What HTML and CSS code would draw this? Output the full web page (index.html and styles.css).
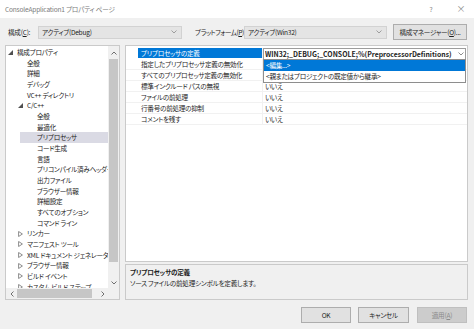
FILE: index.html
```html
<!DOCTYPE html>
<html lang="ja">
<head>
<meta charset="utf-8">
<link rel="stylesheet" href="styles.css">
</head>
<body>
<div class="titlebar">
  <span class="title">ConsoleApplication1 プロパティ ページ</span>
  <span class="tb-btn help">?</span>
  <span class="tb-btn close">×</span>
</div>

<div class="toolbar">
  <span class="lbl cfg-lbl">構成(<u>C</u>):</span>
  <div class="select cfg-sel"><span class="sel-text">アクティブ(Debug)</span><svg class="chev" width="6" height="4" viewBox="0 0 6 4"><polyline points="0.5,0.5 3,3 5.5,0.5" fill="none" stroke="#8a8a8a" stroke-width="0.8"/></svg></div>
  <span class="lbl plat-lbl">プラットフォーム(<u>P</u>):</span>
  <div class="select plat-sel"><span class="sel-text">アクティブ(Win32)</span><svg class="chev" width="6" height="4" viewBox="0 0 6 4"><polyline points="0.5,0.5 3,3 5.5,0.5" fill="none" stroke="#8a8a8a" stroke-width="0.8"/></svg></div>
  <button class="btn mgr">構成マネージャー(<u>O</u>)...</button>
</div>

<div class="main">
  <div class="tree">
    <div class="tree-body">
      <ul class="tree-list">
        <li class="row l0"><span class="tw"><svg width="5" height="5" viewBox="0 0 5 5"><polygon points="5,0 5,5 0,5" fill="#505050"/></svg></span><span>構成プロパティ</span></li>
        <li class="row l1"><span class="tw"></span><span>全般</span></li>
        <li class="row l1"><span class="tw"></span><span>詳細</span></li>
        <li class="row l1"><span class="tw"></span><span>デバッグ</span></li>
        <li class="row l1"><span class="tw"></span><span>VC++ ディレクトリ</span></li>
        <li class="row l1"><span class="tw"><svg width="5" height="5" viewBox="0 0 5 5"><polygon points="5,0 5,5 0,5" fill="#505050"/></svg></span><span>C/C++</span></li>
        <li class="row l2"><span class="tw"></span><span>全般</span></li>
        <li class="row l2"><span class="tw"></span><span>最適化</span></li>
        <li class="row l2 sel"><span class="tw"></span><span>プリプロセッサ</span></li>
        <li class="row l2"><span class="tw"></span><span>コード生成</span></li>
        <li class="row l2"><span class="tw"></span><span>言語</span></li>
        <li class="row l2"><span class="tw"></span><span>プリコンパイル済みヘッダー</span></li>
        <li class="row l2"><span class="tw"></span><span>出力ファイル</span></li>
        <li class="row l2"><span class="tw"></span><span>ブラウザー情報</span></li>
        <li class="row l2"><span class="tw"></span><span>詳細設定</span></li>
        <li class="row l2"><span class="tw"></span><span>すべてのオプション</span></li>
        <li class="row l2"><span class="tw"></span><span>コマンド ライン</span></li>
        <li class="row l1"><span class="tw"><svg width="5" height="6" viewBox="0 0 5 6"><polygon points="0.6,0.5 4.4,3 0.6,5.5" fill="none" stroke="#707070" stroke-width="0.8"/></svg></span><span>リンカー</span></li>
        <li class="row l1"><span class="tw"><svg width="5" height="6" viewBox="0 0 5 6"><polygon points="0.6,0.5 4.4,3 0.6,5.5" fill="none" stroke="#707070" stroke-width="0.8"/></svg></span><span>マニフェスト ツール</span></li>
        <li class="row l1"><span class="tw"><svg width="5" height="6" viewBox="0 0 5 6"><polygon points="0.6,0.5 4.4,3 0.6,5.5" fill="none" stroke="#707070" stroke-width="0.8"/></svg></span><span>XML ドキュメント ジェネレータ</span></li>
        <li class="row l1"><span class="tw"><svg width="5" height="6" viewBox="0 0 5 6"><polygon points="0.6,0.5 4.4,3 0.6,5.5" fill="none" stroke="#707070" stroke-width="0.8"/></svg></span><span>ブラウザー情報</span></li>
        <li class="row l1"><span class="tw"><svg width="5" height="6" viewBox="0 0 5 6"><polygon points="0.6,0.5 4.4,3 0.6,5.5" fill="none" stroke="#707070" stroke-width="0.8"/></svg></span><span>ビルド イベント</span></li>
        <li class="row l1"><span class="tw"><svg width="5" height="6" viewBox="0 0 5 6"><polygon points="0.6,0.5 4.4,3 0.6,5.5" fill="none" stroke="#707070" stroke-width="0.8"/></svg></span><span>カスタム ビルド ステップ</span></li>
      </ul>
      <div class="vscroll">
        <div class="arrow up"><svg width="6" height="4" viewBox="0 0 6 4"><polyline points="0.5,3.5 3,1 5.5,3.5" fill="none" stroke="#606060" stroke-width="0.9"/></svg></div>
        <div class="vthumb"></div>
        <div class="vtrack"></div>
        <div class="arrow down"><svg width="6" height="4" viewBox="0 0 6 4"><polyline points="0.5,0.5 3,3 5.5,0.5" fill="none" stroke="#606060" stroke-width="0.9"/></svg></div>
      </div>
    </div>
    <div class="hscroll-row">
      <div class="harrow"><svg width="4" height="6" viewBox="0 0 4 6"><polyline points="3.5,0.5 1,3 3.5,5.5" fill="none" stroke="#606060" stroke-width="0.9"/></svg></div>
      <div class="hthumb"></div>
      <div class="htrack"></div>
      <div class="harrow"><svg width="4" height="6" viewBox="0 0 4 6"><polyline points="0.5,0.5 3,3 0.5,5.5" fill="none" stroke="#606060" stroke-width="0.9"/></svg></div>
      <div class="corner"></div>
    </div>
  </div>

  <div class="right">
    <div class="grid">
      <div class="grow">
        <div class="gut"></div>
        <div class="gname active">プリプロセッサの定義</div>
        <div class="gval">
          <div class="editbox"><span class="edit-text">WIN32;_DEBUG;_CONSOLE;%(PreprocessorDefinitions)</span><span class="edit-btn"><svg width="6" height="4" viewBox="0 0 6 4"><polyline points="0.5,0.5 3,3 5.5,0.5" fill="none" stroke="#707070" stroke-width="0.8"/></svg></span></div>
        </div>
      </div>
      <div class="grow"><div class="gut"></div><div class="gname">指定したプリプロセッサ定義の無効化</div><div class="gval"></div></div>
      <div class="grow"><div class="gut"></div><div class="gname">すべてのプリプロセッサ定義の無効化</div><div class="gval"></div></div>
      <div class="grow"><div class="gut"></div><div class="gname">標準インクルード パスの無視</div><div class="gval">いいえ</div></div>
      <div class="grow"><div class="gut"></div><div class="gname">ファイルの前処理</div><div class="gval">いいえ</div></div>
      <div class="grow"><div class="gut"></div><div class="gname">行番号の前処理の抑制</div><div class="gval">いいえ</div></div>
      <div class="grow"><div class="gut"></div><div class="gname">コメントを残す</div><div class="gval">いいえ</div></div>

      <ul class="dropdown">
        <li class="dd-item hl">&lt;編集...&gt;</li>
        <li class="dd-item">&lt;親またはプロジェクトの既定値から継承&gt;</li>
      </ul>
    </div>
    <div class="desc">
      <div class="desc-title">プリプロセッサの定義</div>
      <div class="desc-text">ソース ファイルの前処理シンボルを定義します。</div>
    </div>
  </div>
</div>

<div class="buttons">
  <button class="btn dlg ok">OK</button>
  <button class="btn dlg cancel">キャンセル</button>
  <button class="btn dlg apply" disabled>適用(<u>A</u>)</button>
</div>
</body>
</html>
```

FILE: styles.css
```css
* { box-sizing: border-box; }

html, body {
  margin: 0;
  padding: 0;
}

body {
  width: 474px;
  height: 329px;
  overflow: hidden;
  background: #f0f0f0;
  font-family: "Noto Sans CJK JP", "Noto Sans", sans-serif;
  font-size: 6.6px;
  letter-spacing: -0.25px;
  font-feature-settings: "palt";
  color: #1e1e1e;
}

u { text-decoration: underline; text-underline-offset: 1px; }

/* title bar */
.titlebar {
  height: 18px;
  background: #ffffff;
  display: flex;
  align-items: center;
  padding-left: 5px;
  color: #7c7c7c;
  line-height: 18px;
}
.title { flex: 1; letter-spacing: -0.2px; }
.tb-btn { text-align: center; color: #8a8a8a; }
.help { width: 34px; }
.close { width: 26px; font-size: 9px; }

/* toolbar */
.toolbar {
  display: flex;
  align-items: center;
  height: 16px;
  margin-top: 6px;
  padding-left: 8px;
  line-height: 10px;
}
.lbl { white-space: nowrap; }
.cfg-lbl { width: 30px; }
.plat-lbl { width: 49px; margin-left: 13px; letter-spacing: -0.45px; }
.select {
  height: 13px;
  background: #e4e4e4;
  border: 1px solid #d2d2d2;
  display: flex;
  align-items: center;
  padding: 0 4px 0 3px;
}
.sel-text { flex: 1; white-space: nowrap; }
.cfg-sel { width: 144px; }
.plat-sel { width: 143px; }

.btn {
  font: inherit;
  font-feature-settings: "palt";
  letter-spacing: inherit;
  color: #1e1e1e;
  background: #e1e1e1;
  border: 1px solid #adadad;
  padding: 0;
  line-height: 10px;
  white-space: nowrap;
}
.mgr { width: 74px; height: 16px; margin-left: 6px; }

/* main */
.main {
  display: flex;
  height: 255px;
  margin-top: 5px;
  padding-left: 5px;
}

.tree {
  width: 115px;
  background: #ffffff;
  border: 1px solid #cacaca;
  display: flex;
  flex-direction: column;
}
.tree-body {
  flex: 1;
  display: flex;
  min-height: 0;
}
.tree-list {
  list-style: none;
  margin: 0;
  padding: 1px 0 0 0;
  flex: 1;
  min-width: 0;
  overflow: hidden;
}
.row {
  display: flex;
  align-items: center;
  height: 10.68px;
  line-height: 10.68px;
  white-space: nowrap;
  color: #222;
}
.tw {
  width: 8px;
  flex: none;
  display: flex;
  align-items: center;
  justify-content: center;
  margin-right: 3px;
}
.l0 { padding-left: 0; }
.l1 { padding-left: 10px; }
.l2 { padding-left: 20px; }
.row.sel {
  margin-left: 14px;
  padding-left: 6px;
  background: #dadae4;
}

.vscroll {
  width: 11px;
  flex: none;
  background: #f0f0f0;
  display: flex;
  flex-direction: column;
}
.arrow {
  display: flex;
  align-items: center;
  justify-content: center;
}
.arrow.up { height: 13px; }
.arrow.down { height: 11px; }
.vthumb {
  height: 203px;
  margin: 0 1px;
  background: #c6c6c6;
}
.vtrack { flex: 1; }

.hscroll-row {
  height: 11px;
  flex: none;
  display: flex;
  background: #f0f0f0;
}
.harrow {
  width: 11px;
  display: flex;
  align-items: center;
  justify-content: center;
}
.hthumb {
  width: 75px;
  margin: 1px 0;
  background: #c6c6c6;
}
.htrack { flex: 1; }
.corner { width: 11px; background: #f0f0f0; }

/* right side */
.right {
  width: 343px;
  margin-left: 5px;
  display: flex;
  flex-direction: column;
}
.grid {
  position: relative;
  height: 217px;
  background: #ffffff;
  border: 1px solid #cacaca;
  padding-top: 2px;
}
.grow {
  display: flex;
  height: 11px;
  line-height: 10px;
  border-bottom: 1px solid #f1f1f1;
  white-space: nowrap;
}
.gut { width: 12px; flex: none; }
.gname {
  width: 125px;
  flex: none;
  padding-left: 3px;
  overflow: hidden;
  border-right: 1px solid #f1f1f1;
}
.gname.active { background: #0078d7; color: #ffffff; }
.gval {
  flex: 1;
  padding-left: 2px;
  min-width: 0;
}
.grow:first-child { border-bottom-color: transparent; }
.grow:first-child .gval { padding-left: 0; }
.editbox {
  height: 12px;
  width: 203px;
  border: 1px solid #9c9c9c;
  background: #fff;
  display: flex;
  align-items: center;
  padding-left: 1px;
}
.edit-text {
  flex: 1;
  font-weight: bold;
  font-size: 6.9px;
  letter-spacing: 0;
  overflow: hidden;
}
.edit-btn {
  width: 8px;
  height: 100%;
  display: flex;
  align-items: center;
  justify-content: center;
}

.dropdown {
  position: absolute;
  left: 137px;
  top: 13px;
  width: 203px;
  height: 24px;
  margin: 0;
  padding: 0;
  list-style: none;
  background: #ffffff;
  border: 1px solid #8e8e8e;
}
.dd-item {
  height: 10.5px;
  line-height: 10.5px;
  padding-left: 2px;
  white-space: nowrap;
}
.dd-item.hl { background: #0078d7; color: #ffffff; }

.desc {
  flex: 1;
  margin-top: 2px;
  border: 1px solid #cacaca;
  padding: 2px 4px 0 4px;
  line-height: 10.5px;
}
.desc-title { font-weight: bold; }

/* dialog buttons */
.buttons {
  display: flex;
  justify-content: flex-end;
  margin-top: 7px;
  padding-right: 7px;
}
.dlg { height: 16px; }
.ok { width: 50px; }
.cancel { width: 51px; margin-left: 7px; }
.apply {
  width: 50px;
  margin-left: 8px;
  background: #cccccc;
  border-color: #bfbfbf;
  color: #8a8a8a;
}
```
